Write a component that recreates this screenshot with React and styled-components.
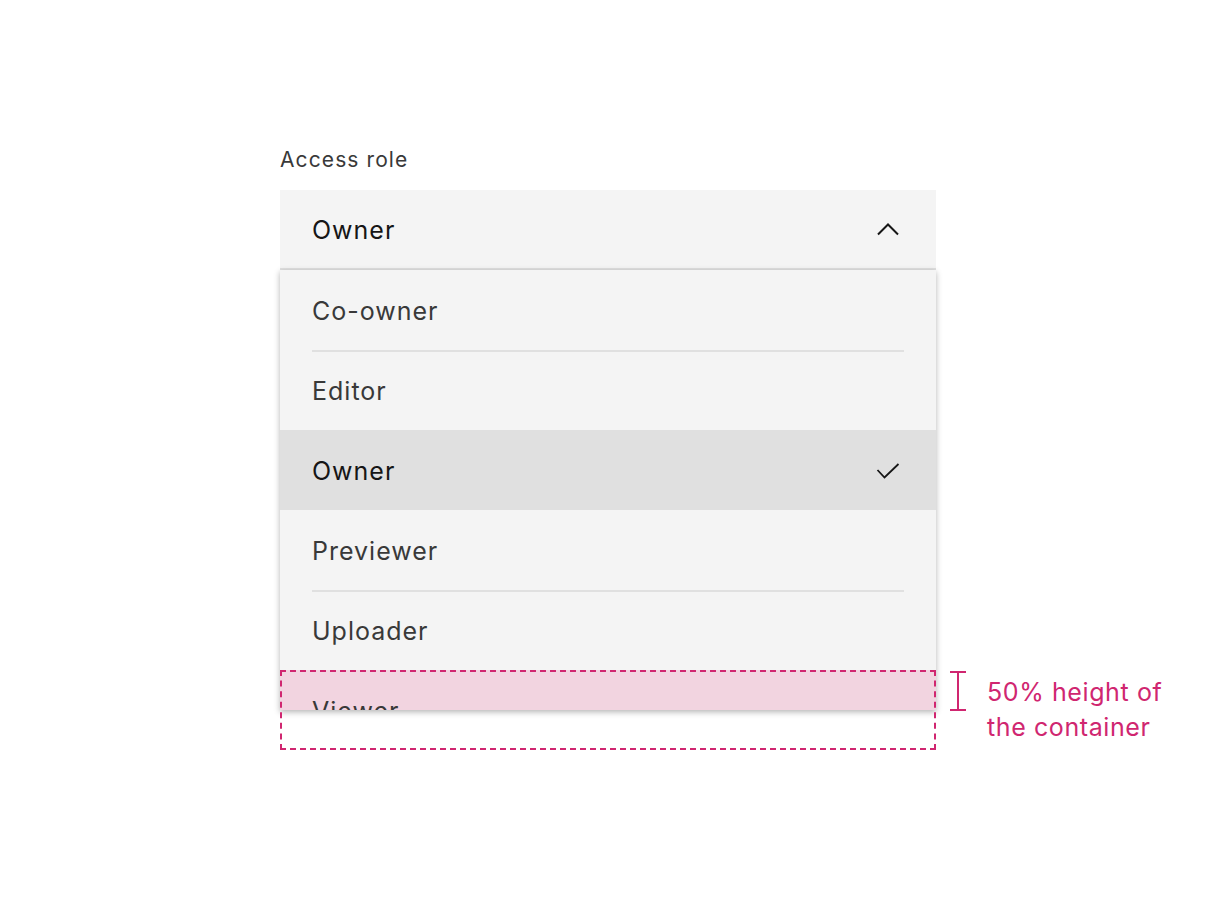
import React from 'react';
import styled, { createGlobalStyle } from 'styled-components';

const GlobalStyle = createGlobalStyle`
  html, body {
    margin: 0;
    padding: 0;
    background: #ffffff;
  }
  body {
    font-family: Inter, "Noto Sans", "Liberation Sans", sans-serif;
    -webkit-font-smoothing: antialiased;
  }
`;

const Page = styled.div`
  display: flex;
  justify-content: center;
  padding-top: 146px;
  min-height: 912px;
  box-sizing: border-box;
`;

const Field = styled.div`
  width: 656px;
  display: flex;
  flex-direction: column;
`;

const Label = styled.label`
  font-size: 21px;
  line-height: 28px;
  letter-spacing: 1.1px;
  color: #393939;
  margin-bottom: 16px;
`;

const Trigger = styled.div`
  height: 80px;
  box-sizing: border-box;
  background: #f4f4f4;
  border-bottom: 2px solid #e0e0e0;
  display: flex;
  align-items: center;
  justify-content: space-between;
  padding: 2px 36px 0 32px;
  font-size: 25px;
  letter-spacing: 1px;
  color: #161616;
`;

const MenuArea = styled.div`
  position: relative;
`;

const Menu = styled.ul`
  list-style: none;
  margin: 0;
  padding: 0;
  height: 440px;
  overflow: hidden;
  background: #f4f4f4;
  box-shadow: 0 2px 6px rgba(0, 0, 0, 0.3);
`;

const Item = styled.li`
  height: 80px;
  padding: 0 32px;
  background: ${p => (p.$selected ? '#e0e0e0' : p.$marked ? '#f2d4e0' : '#f4f4f4')};
`;

const ItemInner = styled.div`
  height: 100%;
  box-sizing: border-box;
  border-top: 2px solid ${p => (p.$line ? '#e0e0e0' : 'transparent')};
  display: flex;
  align-items: center;
  justify-content: space-between;
  font-size: 25px;
  letter-spacing: 1px;
  color: ${p => (p.$selected ? '#161616' : '#393939')};

  svg {
    margin-right: 4px;
  }
`;

const Marker = styled.div`
  position: absolute;
  left: 0;
  top: 400px;
  width: 656px;
  height: 80px;
  box-sizing: border-box;
  border: 2px dashed #d02670;
  pointer-events: none;
`;

const Note = styled.div`
  position: absolute;
  left: calc(100% + 16px);
  top: -1px;
  display: flex;
  gap: 21px;
  align-items: flex-start;
`;

const NoteText = styled.div`
  font-size: 25px;
  line-height: 35px;
  letter-spacing: 0.6px;
  color: #d02670;
  white-space: nowrap;
  margin-top: 4px;
`;

const ChevronUp = () => (
  <svg width="24" height="24" viewBox="0 0 24 24" fill="none">
    <path d="M2 16.5 L12 6.5 L22 16.5" stroke="#161616" strokeWidth="2" />
  </svg>
);

const Check = () => (
  <svg width="24" height="24" viewBox="0 0 24 24" fill="none">
    <path d="M1.5 11 L8.5 18.5 L22.5 5" stroke="#161616" strokeWidth="1.8" />
  </svg>
);

const Bracket = () => (
  <svg width="16" height="40" viewBox="0 0 16 40" fill="none">
    <path d="M0 1 H16 M8 1 V39 M0 39 H16" stroke="#d02670" strokeWidth="2" />
  </svg>
);

const roles = ['Co-owner', 'Editor', 'Owner', 'Previewer', 'Uploader', 'Viewer'];
const selected = 'Owner';

export default function App() {
  const selIndex = roles.indexOf(selected);
  return (
    <Page>
      <GlobalStyle />
      <Field>
        <Label>Access role</Label>
        <Trigger>
          <span>{selected}</span>
          <ChevronUp />
        </Trigger>
        <MenuArea>
          <Menu>
            {roles.map((r, i) => {
              const isSel = i === selIndex;
              const marked = r === 'Viewer';
              const line = i !== 0 && !isSel && i !== selIndex + 1 && !marked;
              return (
                <Item key={r} $selected={isSel} $marked={marked}>
                  <ItemInner $line={line} $selected={isSel}>
                    <span>{r}</span>
                    {isSel && <Check />}
                  </ItemInner>
                </Item>
              );
            })}
          </Menu>
          <Marker>
            <Note>
              <Bracket />
              <NoteText>
                50% height of
                <br />
                the container
              </NoteText>
            </Note>
          </Marker>
        </MenuArea>
      </Field>
    </Page>
  );
}
